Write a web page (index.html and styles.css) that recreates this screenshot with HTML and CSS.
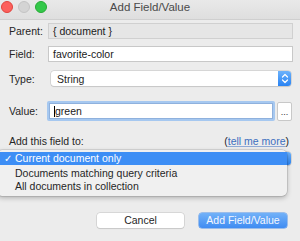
FILE: index.html
```html
<!DOCTYPE html>
<html>
<head>
<meta charset="utf-8">
<link rel="stylesheet" href="styles.css">
</head>
<body>
<div class="window">
  <div class="titlebar">
    <div class="lights">
      <span class="light red"></span>
      <span class="light grey"></span>
      <span class="light green"></span>
    </div>
    <div class="title">Add Field/Value</div>
  </div>
  <div class="form">
    <div class="row r-parent">
      <span class="label">Parent:</span>
      <div class="box readonly">{ document }</div>
    </div>
    <div class="row r-field">
      <span class="label">Field:</span>
      <div class="box">favorite-color</div>
    </div>
    <div class="row r-type">
      <span class="label">Type:</span>
      <div class="select">
        <span class="sel-text">String</span>
        <span class="stepper">
          <svg width="8" height="11" viewBox="0 0 8 11"><path d="M1.5 4 L4 1.5 L6.5 4 M1.5 7 L4 9.5 L6.5 7" fill="none" stroke="#fff" stroke-width="1.2" stroke-linecap="round" stroke-linejoin="round"/></svg>
        </span>
      </div>
    </div>
    <div class="row r-value">
      <span class="label">Value:</span>
      <div class="focus"><div class="box value"><span class="caret"></span>green</div></div>
      <div class="dots">...</div>
    </div>
    <div class="row r-add">
      <span class="addlabel">Add this field to:</span>
      <span class="more">(<span class="link">tell me more</span>)</span>
    </div>
    <div class="scope">
      <div class="select under">
        <span class="stepper small"></span>
      </div>
      <div class="menu">
        <div class="item active"><span class="check">✓</span>Current document only</div>
        <div class="item">Documents matching query criteria</div>
        <div class="item">All documents in collection</div>
      </div>
    </div>
    <div class="buttons">
      <div class="btn cancel">Cancel</div>
      <div class="btn primary">Add Field/Value</div>
    </div>
  </div>
</div>
</body>
</html>
```
FILE: styles.css
```css
* { box-sizing: border-box; }
html, body { margin: 0; padding: 0; }
body {
  width: 300px;
  height: 241px;
  overflow: hidden;
  background: #ececec;
  font-family: "Liberation Sans", Arial, sans-serif;
  font-size: 10.5px;
  color: #262626;
}
.window { width: 300px; height: 241px; position: relative; }
.titlebar {
  height: 20px;
  position: relative;
  background: linear-gradient(#e9e9e9, #dedede);
  border-bottom: 1px solid #cfcfcf;
}
.lights { position: absolute; left: 1px; top: 1px; display: flex; gap: 5px; }
.light { width: 12px; height: 12px; border-radius: 50%; display: block; }
.light.red { background: #fc605c; border: 1px solid #e0443e; }
.light.grey { background: #d4d4d4; border: 1px solid #c4c4c4; }
.light.green { background: #34c84a; border: 1px solid #27aa35; }
.title {
  text-align: center;
  font-size: 11.5px;
  color: #4a4a4a;
  line-height: 14px;
  padding-top: 0;
}
.form { padding: 0 7px 0 9px; }
.row { display: flex; align-items: center; }
.label { width: 39px; flex: none; color: #262626; }
.box {
  flex: 1;
  height: 16px;
  line-height: 15px;
  background: #fff;
  border: 1px solid #c8c8c8;
  padding-left: 4px;
  color: #1a1a1a;
}
.box.readonly { background: #e6e6e6; border-color: #d0d0d0; }
.r-parent { margin-top: 3px; }
.r-field { margin-top: 7px; }
.r-type { margin-top: 9px; }
.select {
  flex: 1;
  margin-left: 3px;
  margin-right: 2px;
  height: 15px;
  background: #fff;
  border-radius: 3px;
  box-shadow: 0 0 0 0.5px #c0c0c0, 0 1px 1px rgba(0,0,0,0.12);
  display: flex;
  align-items: center;
  position: relative;
}
.sel-text { flex: 1; padding-left: 6px; }
.stepper {
  width: 13px;
  height: 15px;
  background: linear-gradient(#6cb2fb, #2a83f3);
  border-radius: 0 3px 3px 0;
  display: flex;
  align-items: center;
  justify-content: center;
}
.r-value { margin-top: 15px; }
.focus {
  flex: 1;
  margin-left: -1px;
  padding: 2px;
  background: #a6c8f0;
  border-radius: 2px;
  display: flex;
}
.box.value { height: 16px; border-color: #8fb1dd; padding-left: 4px; }
.caret {
  display: inline-block;
  width: 1px;
  height: 11px;
  background: #000;
  vertical-align: -2px;
  margin-right: 0;
}
.dots {
  width: 15px;
  height: 19px;
  margin-left: 2px;
  margin-right: 1px;
  background: #fff;
  border: 1px solid #c8c8c8;
  border-radius: 2px;
  font-size: 9px;
  text-align: center;
  line-height: 19px;
  color: #333;
}
.r-add { margin-top: 14px; justify-content: space-between; padding-right: 4px; height: 12px; }
.more { color: #262626; }
.link { color: #3c6fbf; text-decoration: underline; text-decoration-color: #8fa9d5; }
.scope { position: relative; height: 46px; margin-top: 3px; }
.select.under { position: absolute; left: 42px; right: 2px; top: 2px; height: 13px; margin: 0; justify-content: flex-end; }
.stepper.small { height: 13px; width: 12px; }
.menu {
  position: absolute;
  left: -12px;
  top: 0;
  width: 290px;
  height: 46px;
  background: #f0f0f0;
  border-radius: 5px;
  box-shadow: 0 0 0 0.5px rgba(0,0,0,0.18), 0 2px 5px rgba(0,0,0,0.25);
  padding-top: 2px;
}
.item {
  height: 13px;
  line-height: 13px;
  padding-left: 18px;
  position: relative;
  color: #262626;
}
.item.active { background: #3d8ef5; color: #fff; margin-bottom: 2px; }
.check { position: absolute; left: 7px; top: 0; font-size: 10px; }
.buttons {
  display: flex;
  justify-content: flex-end;
  gap: 15px;
  margin-top: 17px;
  padding-right: 6px;
}
.btn {
  width: 88px;
  height: 15px;
  line-height: 15px;
  text-align: center;
  border-radius: 3px;
}
.cancel {
  width: 87px;
  background: #fff;
  box-shadow: 0 0 0 0.5px #c2c2c2, 0 1px 1px rgba(0,0,0,0.12);
  color: #262626;
}
.primary {
  background: linear-gradient(#72b1f8, #3f8cf2);
  color: #f4f8ff;
  box-shadow: 0 0 0 0.5px #4a8ee8;
}
```
